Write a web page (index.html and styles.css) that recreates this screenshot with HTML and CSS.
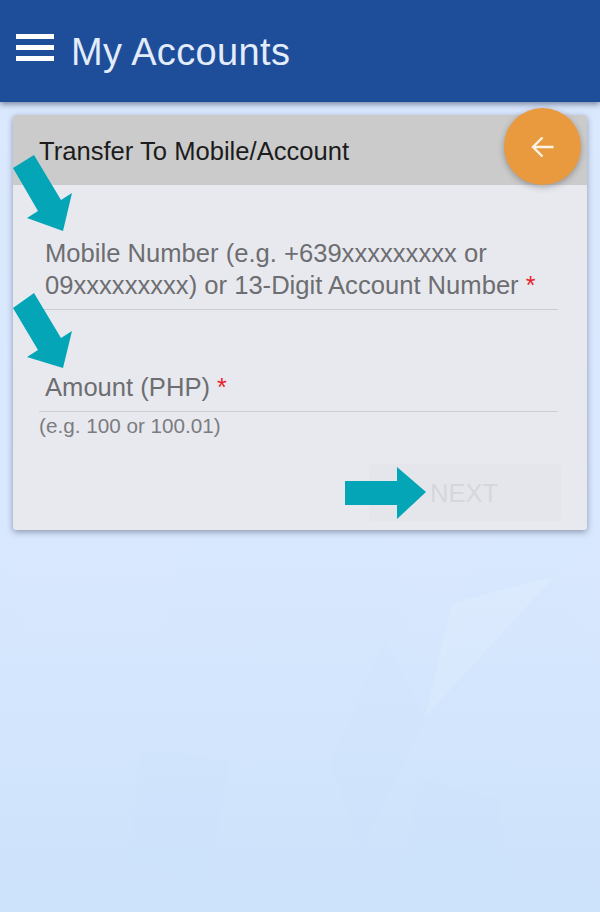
FILE: index.html
```html
<!DOCTYPE html>
<html lang="en">
<head>
<meta charset="utf-8">
<title>My Accounts</title>
<link rel="stylesheet" href="styles.css">
</head>
<body>
<div class="app">
  <svg class="facets" viewBox="0 0 600 912" aria-hidden="true">
    <polygon class="f-a" points="555,576 452,603 425,717"/>
    <polygon class="f-b" points="555,576 600,670 600,540"/>
    <polygon class="f-b" points="0,530 190,530 160,640 30,650"/>
    <polygon class="f-c" points="385,640 425,720 360,850 330,760"/>
    <polygon class="f-c" points="140,750 230,760 210,880 130,860"/>
    <polygon class="f-b" points="395,530 490,530 440,670 410,640"/>
    <polygon class="f-c" points="420,780 500,800 510,900 400,880"/>
  </svg>
  <header class="topbar">
    <svg class="menu" viewBox="0 0 38 27" aria-hidden="true">
      <rect x="0" y="0" width="38" height="5"/>
      <rect x="0" y="11" width="38" height="5"/>
      <rect x="0" y="22" width="38" height="5"/>
    </svg>
    <h1 class="title">My Accounts</h1>
  </header>
  <main class="card">
    <h2 class="card-head">Transfer To Mobile/Account</h2>
    <form class="card-body">
      <div class="field field-mobile">
        <label class="label">Mobile Number (e.g. +639xxxxxxxxx or 09xxxxxxxxx) or 13-Digit Account Number <span class="req">*</span></label>
      </div>
      <div class="field field-amount">
        <label class="label">Amount (PHP) <span class="req">*</span></label>
      </div>
      <p class="hint">(e.g. 100 or 100.01)</p>
      <div class="actions">
        <button class="next" type="button" disabled>NEXT</button>
      </div>
    </form>
    <button class="fab" type="button" aria-label="Back">
      <svg viewBox="0 0 24 24" width="24" height="24" aria-hidden="true">
        <path d="M22.5 12H2.5M11.5 2.5 2 12l9.5 9.5"/>
      </svg>
    </button>
  </main>
  <svg class="callouts" viewBox="0 0 600 912" aria-hidden="true">
    <polygon points="13,168 34,155 61,200 72,193 63,231 27,218 38,211"/>
    <polygon points="13,308 34,293 61,338 72,331 63,368 27,357 38,350"/>
    <polygon points="345,481 397,481 397,467 426,492 397,519 397,505 345,505"/>
  </svg>
</div>
</body>
</html>
```
FILE: styles.css
```css
* { box-sizing: border-box; }
html, body { margin: 0; padding: 0; }
body {
  font-family: "Liberation Sans", Arial, sans-serif;
  background: #d5e6fd;
}
.app {
  position: relative;
  width: 600px;
  height: 912px;
  overflow: hidden;
  background: linear-gradient(180deg, #dbe9fe 0%, #d9e8fe 55%, #cde3fb 100%);
  display: flex;
  flex-direction: column;
}
.facets { position: absolute; left: 0; top: 0; width: 600px; height: 912px; }
.f-a { fill: #ffffff; opacity: 0.12; }
.f-b { fill: #ffffff; opacity: 0.03; }
.f-c { fill: #b9d6f7; opacity: 0.03; }

.topbar {
  position: relative;
  height: 102px;
  flex: none;
  background: #1e4e99;
  box-shadow: 0 2px 6px rgba(30, 40, 70, 0.55);
  display: flex;
  align-items: flex-start;
  padding: 34px 0 0 16px;
  gap: 17px;
}
.menu { width: 38px; height: 27px; fill: #ffffff; flex: none; }
.title {
  margin: -3px 0 0;
  font-size: 38px;
  line-height: 42px;
  font-weight: 400;
  letter-spacing: 0.35px;
  color: #e3ecfb;
}
.card {
  position: relative;
  margin: 13px 13px 0;
  height: 415px;
  background: #e8e9ef;
  border-radius: 3px;
  box-shadow: 0 2px 6px rgba(40, 50, 80, 0.45);
  display: flex;
  flex-direction: column;
}
.card-head {
  margin: 0;
  height: 70px;
  flex: none;
  background: #cbcbcb;
  border-radius: 3px 3px 0 0;
  padding: 0 0 0 26px;
  font-size: 25.6px;
  line-height: 72px;
  font-weight: 400;
  color: #1c1c1c;
}
.card-body { padding: 0 29px 0 26px; display: flex; flex-direction: column; flex: 1; }
.field { border-bottom: 1.5px solid #ccced3; padding-left: 6px; }
.field-mobile { height: 125px; padding-top: 52px; }
.field-amount { height: 102px; padding-top: 61px; }
.label {
  display: block;
  font-size: 25.6px;
  line-height: 32px;
  color: #6d6e71;
}
.req { color: #e8222a; font-size: 25px; }
.hint {
  margin: 2px 0 0;
  font-size: 20.7px;
  line-height: 24px;
  color: #7b7c80;
}
.actions { display: flex; justify-content: flex-end; margin: 26px -3px 0 0; }
.next {
  width: 192px;
  height: 57px;
  border: 0;
  border-radius: 2px;
  background: #e5e6eb;
  font-family: inherit;
  font-size: 25.5px;
  color: #d6d7dc;
  text-align: left;
  padding: 1px 0 0 61px;
}
.fab {
  position: absolute;
  top: -7px;
  right: 6px;
  width: 77px;
  height: 77px;
  border: 0;
  border-radius: 50%;
  background: #ea9a3e;
  box-shadow: 0 2px 6px rgba(60, 60, 70, 0.4);
  display: flex;
  align-items: center;
  justify-content: center;
  padding: 0;
}
.fab path { fill: none; stroke: #fdf4e6; stroke-width: 2.4; }
.callouts { position: absolute; left: 0; top: 0; width: 600px; height: 912px; fill: #03a5b7; pointer-events: none; }
```
